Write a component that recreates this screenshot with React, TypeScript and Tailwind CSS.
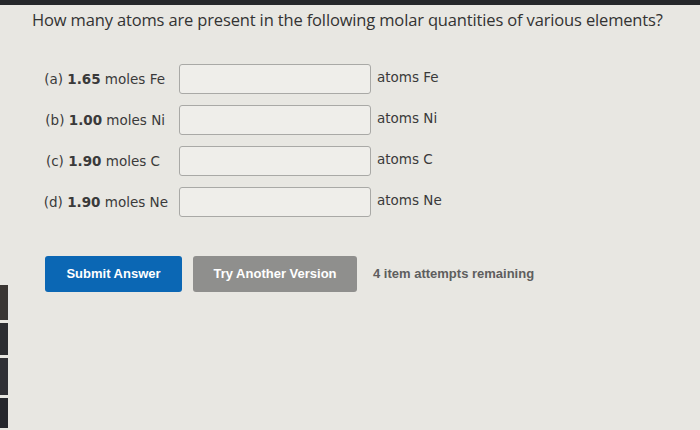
const ROWS = [
  { tag: '(a)', qty: '1.65', el: 'Fe', pad: 'pr-[14px]' },
  { tag: '(b)', qty: '1.00', el: 'Ni', pad: 'pr-[14px]' },
  { tag: '(c)', qty: '1.90', el: 'C', pad: 'pr-[19px]' },
  { tag: '(d)', qty: '1.90', el: 'Ne', pad: 'pr-[11px]' },
];

export default function App() {
  return (
    <div className="w-[700px] h-[430px] overflow-hidden flex flex-col bg-[#e8e7e2]">
      <div className="h-[5px] bg-[#26282b]" />
      <div className="flex flex-1">
        <div className="w-[8px] flex flex-col">
          <div className="flex-1" />
          <div className="h-[35px] bg-[#3a3633]" />
          <div className="h-[3px]" />
          <div className="h-[32px] bg-[#2c2d31]" />
          <div className="h-[3px]" />
          <div className="h-[37px] bg-[#2f3035]" />
          <div className="h-[3px]" />
          <div className="h-[30px] bg-[#25272c]" />
          <div className="h-[2px]" />
        </div>
        <div className="flex-1 flex flex-col font-['Open_Sans',sans-serif] text-[#333]">
          <h1 className="mt-[3px] ml-[24px] text-[16.5px] tracking-[-0.15px] leading-[24px]">
            How many atoms are present in the following molar quantities of various elements?
          </h1>
          <div className="mt-[32px] flex flex-col gap-[11px] font-[DejaVu_Sans,Verdana,sans-serif] text-[13.5px] text-[#3a3a3a]">
            {ROWS.map((r) => (
              <div key={r.tag} className="flex items-start">
                <div className={`w-[171px] h-[30px] flex items-center justify-end ${r.pad}`}>
                  {r.tag}&nbsp;<b className="font-bold">{r.qty}</b>&nbsp;moles {r.el}
                </div>
                <div className="w-[192px] h-[30px] bg-[#efeeea] border border-[#a9a9a6] rounded-[3px]" />
                <div className="ml-[6px] mt-[3px]">atoms {r.el}</div>
              </div>
            ))}
          </div>
          <div className="mt-[39px] ml-[37px] flex items-center font-['Liberation_Sans',sans-serif] font-bold text-[13px]">
            <button className="w-[137px] h-[36px] rounded-[3px] bg-[#0b67b4] text-white">Submit Answer</button>
            <button className="ml-[11px] w-[164px] h-[36px] rounded-[3px] bg-[#8f8f8d] text-white">Try Another Version</button>
            <span className="ml-[16px] text-[#5e5e5e]">4 item attempts remaining</span>
          </div>
        </div>
      </div>
    </div>
  );
}
